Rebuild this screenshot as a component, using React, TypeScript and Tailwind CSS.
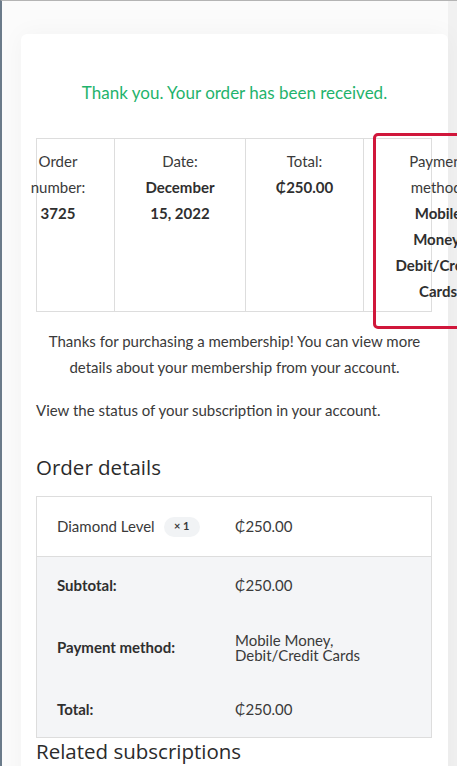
import React from "react";

const overview = [
  { label: "Order number:", value: "3725", cell: "w-[78px]", inner: "w-[60px] ml-[-9px]" },
  { label: "Date:", value: "December 15, 2022", cell: "w-[131px]", inner: "w-[90px] mx-auto" },
  { label: "Total:", value: "₵250.00", cell: "w-[118px]", inner: "w-[100px] mx-auto" },
  { label: "Payment method:", value: "Mobile Money, Debit/Credit Cards", cell: "w-[69px]", inner: "w-[90px] ml-[29px]" },
];

const totals = [
  { label: "Subtotal:", value: "₵250.00", row: "h-[56px]" },
  { label: "Payment method:", value: "Mobile Money,\nDebit/Credit Cards", row: "h-[69px]" },
  { label: "Total:", value: "₵250.00", row: "h-[55px]" },
];

export default function App() {
  return (
    <div className="relative flex h-[766px] overflow-hidden border-t border-[#b4b4b4] border-l-2 border-l-[#6b7b8a] bg-[#fbfbfb] font-['Lato','Liberation_Sans',sans-serif] text-[#3a3a3a]">
      <div className="relative z-10 flex-1 pl-[19px] pt-[33px]">
        <div className="h-[800px] rounded-t-md bg-white px-[15px] pt-[46px] shadow-[0_0_24px_rgba(0,0,0,0.04)]">
          {/* Thank you notice */}
          <p className="text-center text-[17px] leading-[26px] text-[#1fb36c]">
            Thank you. Your order has been received.
          </p>

          {/* Order overview */}
          <div className="mt-[32px] flex h-[174px] w-[396px] border border-[#dddddd]">
            {overview.map((item, i) => (
              <div
                key={item.label}
                className={`${item.cell} shrink-0 pt-[9px] text-[15px] leading-[26px] ${
                  i < overview.length - 1 ? "border-r border-[#dddddd]" : ""
                }`}
              >
                <div className={`${item.inner} text-center`}>
                  {item.label}
                  <br />
                  <strong className="font-bold text-[#2f2f2f]">{item.value}</strong>
                </div>
              </div>
            ))}
          </div>

          <p className="mx-auto mt-[16px] w-[380px] text-center text-[15px] leading-[26px]">
            Thanks for purchasing a membership! You can view more details about your membership from your account.
          </p>
          <p className="mt-[17px] text-[15px] leading-[26px]">
            View the status of your subscription in your account.
          </p>

          <h2 className="mt-[31px] font-['Open_Sans',sans-serif] text-[20.5px] leading-[26px] text-[#2b2b2b]">
            Order details
          </h2>

          {/* Order details table */}
          <div className="mt-[16px] w-[396px] border border-[#dddddd]">
            <div className="flex h-[60px] items-center border-b border-[#dddddd] bg-white">
              <div className="flex w-[198px] items-center gap-[9px] pl-[20px] text-[15px]">
                <span>Diamond Level</span>
                <span className="flex h-[20px] w-[36px] items-center justify-center rounded-full bg-[#f1f3f5] text-[11px] font-bold">
                  ×&nbsp;1
                </span>
              </div>
              <div className="text-[15px]">₵250.00</div>
            </div>
            <div className="bg-[#f4f5f7]">
              {totals.map((t) => (
                <div key={t.label} className={`flex ${t.row} items-center`}>
                  <div className="w-[198px] pl-[20px] text-[15px] font-bold text-[#2f2f2f]">{t.label}</div>
                  <div className="whitespace-pre-line text-[15px] leading-[15px]">{t.value}</div>
                </div>
              ))}
            </div>
          </div>

          <h2 className="mt-0 font-['Open_Sans',sans-serif] text-[20.5px] leading-[26px] text-[#2b2b2b]">
            Related subscriptions
          </h2>
        </div>
      </div>
      <div className="w-[9px] shrink-0 bg-[#f1f1f1]" />

      {/* highlight annotation */}
      <div className="pointer-events-none absolute left-[371px] top-[132px] z-20 h-[196px] w-[110px] rounded-[5px] border-[3px] border-[#d0173b]" />
    </div>
  );
}
